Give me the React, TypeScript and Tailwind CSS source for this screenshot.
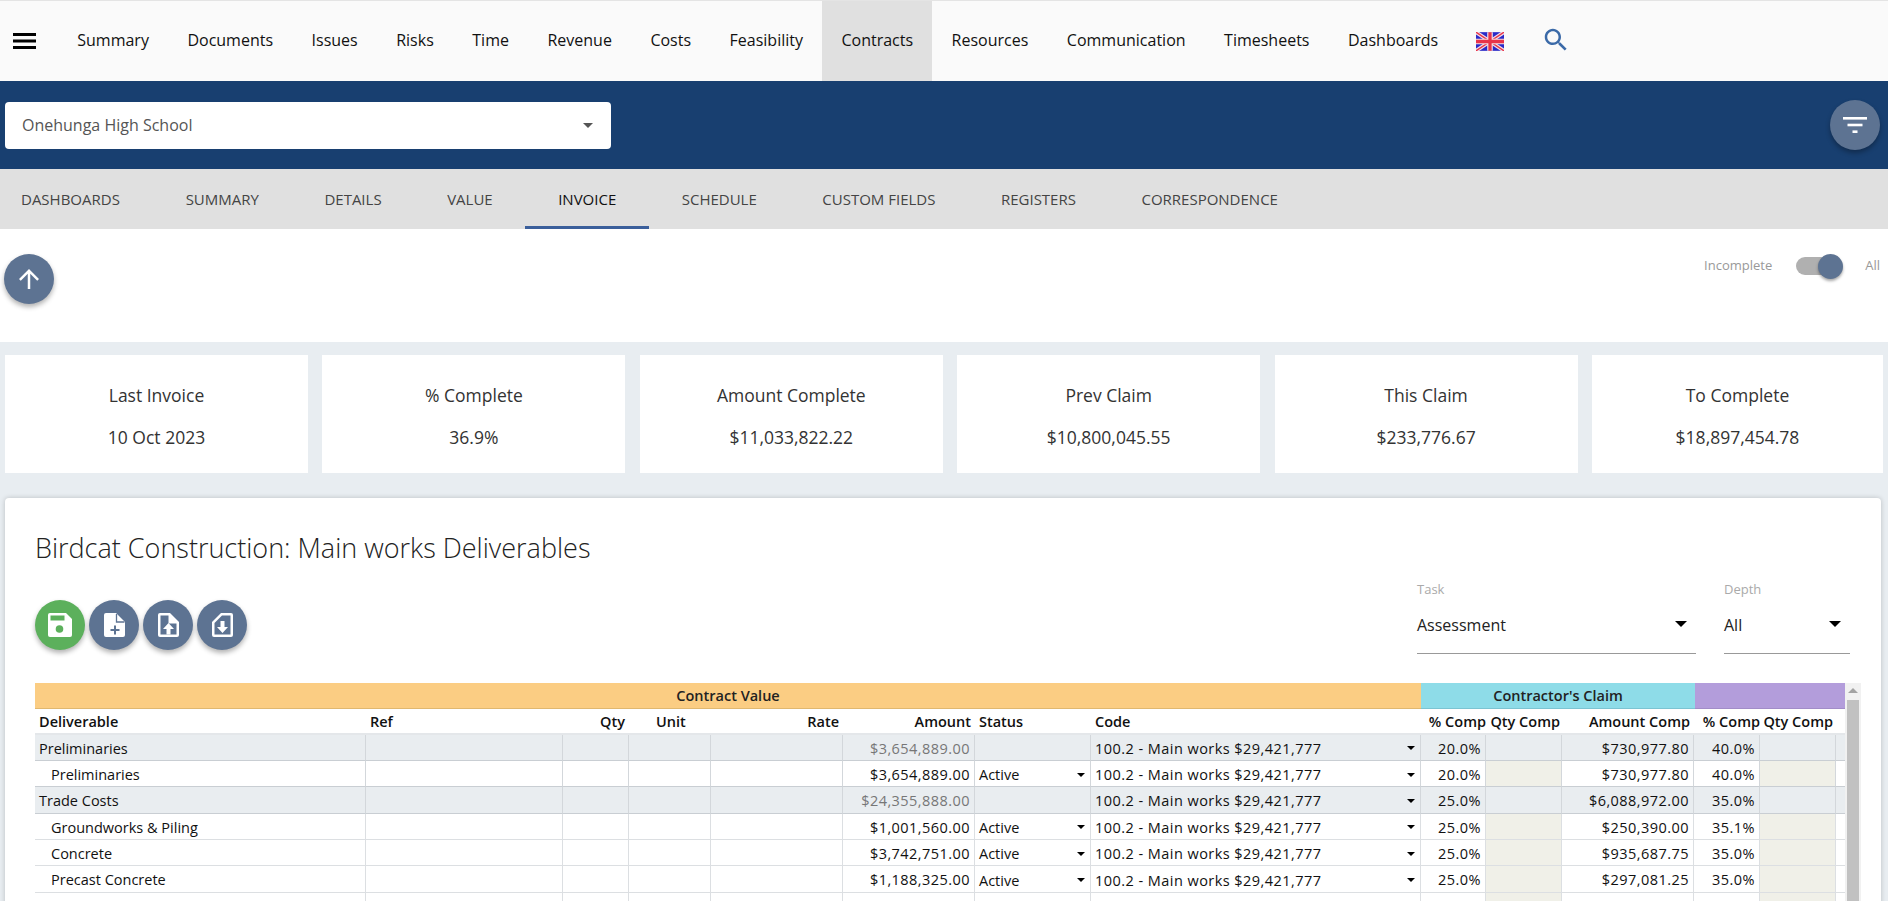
const navItems = ['Summary', 'Documents', 'Issues', 'Risks', 'Time', 'Revenue', 'Costs', 'Feasibility', 'Contracts', 'Resources', 'Communication', 'Timesheets', 'Dashboards']
const tabs = ['DASHBOARDS', 'SUMMARY', 'DETAILS', 'VALUE', 'INVOICE', 'SCHEDULE', 'CUSTOM FIELDS', 'REGISTERS', 'CORRESPONDENCE']
const stats = [
  { label: 'Last Invoice', value: '10 Oct 2023' },
  { label: '% Complete', value: '36.9%' },
  { label: 'Amount Complete', value: '$11,033,822.22' },
  { label: 'Prev Claim', value: '$10,800,045.55' },
  { label: 'This Claim', value: '$233,776.67' },
  { label: 'To Complete', value: '$18,897,454.78' }
]

type TRow = {
  name: string
  amount: string
  group?: boolean
  comp: string
  amountComp: string
  comp2: string
}

const rows: TRow[] = [
  { name: 'Preliminaries', amount: '$3,654,889.00', group: true, comp: '20.0%', amountComp: '$730,977.80', comp2: '40.0%' },
  { name: 'Preliminaries', amount: '$3,654,889.00', comp: '20.0%', amountComp: '$730,977.80', comp2: '40.0%' },
  { name: 'Trade Costs', amount: '$24,355,888.00', group: true, comp: '25.0%', amountComp: '$6,088,972.00', comp2: '35.0%' },
  { name: 'Groundworks & Piling', amount: '$1,001,560.00', comp: '25.0%', amountComp: '$250,390.00', comp2: '35.1%' },
  { name: 'Concrete', amount: '$3,742,751.00', comp: '25.0%', amountComp: '$935,687.75', comp2: '35.0%' },
  { name: 'Precast Concrete', amount: '$1,188,325.00', comp: '25.0%', amountComp: '$297,081.25', comp2: '35.0%' },
  { name: '', amount: '$1,412,500.00', comp: '', amountComp: '$353,125.00', comp2: '' }
]

const Caret = ({ className }: { className: string }) => (
  <span className={`inline-block h-0 w-0 border-x-transparent border-t-black ${className}`} />
)

const RoundBtn = ({ children, green }: { children: React.ReactNode; green?: boolean }) => (
  <div className={`flex h-[50px] w-[50px] shrink-0 items-center justify-center rounded-full shadow-[0_3px_5px_rgba(0,0,0,0.3)] ${green ? 'bg-[#5cb05c]' : 'bg-[#5d7392]'}`}>
    {children}
  </div>
)

const UkFlag = () => (
  <svg width="28" height="19" viewBox="0 0 60 40">
    <rect width="60" height="40" fill="#2a2ac8" />
    <path d="M0 0L60 40M60 0L0 40" stroke="#f3dfe6" strokeWidth="8" />
    <path d="M0 0L60 40M60 0L0 40" stroke="#e8334a" strokeWidth="3" />
    <path d="M30 0V40M0 20H60" stroke="#f3dfe6" strokeWidth="12" />
    <path d="M30 0V40M0 20H60" stroke="#e8334a" strokeWidth="7" />
  </svg>
)

const grid = 'grid grid-cols-[331px_197px_66px_82px_132px_132px_116px_330px_65px_76px_132px_66px_76px_9px]'
const cell = 'border-r border-b overflow-hidden whitespace-nowrap px-1 leading-[27px] h-[26.4px]'
const num = 'tracking-[0.45px]'

export default function App() {
  return (
    <div className="h-[901px] overflow-hidden bg-white text-[#222] [font-family:'Open_Sans',sans-serif]">
      <nav className="flex h-[81px] items-stretch border-t border-[#e4e4e4] bg-[#fafafa]">
        <div className="flex w-[58px] items-center pb-[1px] pl-[13px]">
          <svg width="23" height="16" viewBox="0 0 23 16" fill="#000">
            <rect width="23" height="3" />
            <rect y="6.5" width="23" height="3" />
            <rect y="13" width="23" height="3" />
          </svg>
        </div>
        {navItems.map((item) => (
          <div key={item} className={`flex items-center px-[19.25px] pb-[2px] text-[16px] text-[#111] ${item === 'Contracts' ? 'bg-[#e0e0e0]' : ''}`}>
            {item}
          </div>
        ))}
        <div className="ml-[19px] flex items-center">
          <UkFlag />
        </div>
        <div className="ml-[37px] flex items-center pb-[2px]">
          <svg width="30" height="30" viewBox="0 0 24 24" fill="#3b6aa8">
            <path d="M15.5 14h-.79l-.28-.27C15.41 12.59 16 11.11 16 9.5 16 5.91 13.09 3 9.5 3S3 5.91 3 9.5 5.91 16 9.5 16c1.61 0 3.09-.59 4.23-1.57l.27.28v.79l5 4.99L20.49 19l-4.99-5zm-6 0C7.01 14 5 11.99 5 9.5S7.01 5 9.5 5 14 7.01 14 9.5 11.99 14 9.5 14z" />
          </svg>
        </div>
      </nav>

      <div className="flex h-[88px] items-center justify-between bg-[#183f70] pr-2 pl-[5px]">
        <div className="flex h-[47px] w-[606px] items-center justify-between rounded-sm bg-white pr-[18px] pl-[17px] text-[16px] text-[#555]">
          Onehunga High School
          <Caret className="border-x-[5px] border-t-[5px] !border-t-[#555]" />
        </div>
        <RoundBtn>
          <svg width="24" height="16" viewBox="0 0 24 16" fill="#fff">
            <rect width="24" height="2.600" />
            <rect x="4.500" y="6.700" width="15" height="2.600" />
            <rect x="9.500" y="13.400" width="5" height="2.600" />
          </svg>
        </RoundBtn>
      </div>

      <div className="flex h-[60px] bg-[#e0e0e0]">
        {tabs.map((tab, i) => (
          <div
            key={tab}
            className={`flex items-center border-b-[3px] pt-[3px] text-[15px] ${i === 0 ? 'pr-[33px] pl-[21px]' : 'px-[32.750px]'} ${tab === 'INVOICE' ? 'border-[#3b5f9b] text-[#111]' : 'border-transparent text-[#444]'}`}
          >
            {tab}
          </div>
        ))}
      </div>

      <div className="flex h-[113px] items-start justify-between pt-[25px] pr-2 pl-1">
        <RoundBtn>
          <svg width="30" height="30" viewBox="0 0 24 24" fill="#fff">
            <path d="M4 12l1.41 1.41L11 7.83V20h2V7.830l5.580 5.590L20 12l-8-8-8 8z" />
          </svg>
        </RoundBtn>
        <div className="mt-[2px] flex items-center text-[13px] text-[#999]">
          <span>Incomplete</span>
          <div className="relative mr-[35px] ml-6 h-[18px] w-[34px] rounded-full bg-[#b0b0b0]">
            <span className="absolute top-[-3px] left-[22px] h-[25px] w-[25px] rounded-full bg-[#5d7392] shadow-[0_2px_3px_rgba(0,0,0,0.35)]" />
          </div>
          <span>All</span>
        </div>
      </div>

      <div className="bg-[#e8edf1] px-[5px] py-[13px]">
        <div className="flex gap-[14.4px]">
          {stats.map((s, i) => (
            <div key={s.label} className={`flex h-[118px] ${i === 5 ? 'flex-1' : 'w-[303px]'} flex-col items-center justify-center gap-[16px] bg-white pt-[4px] text-[17.500px] text-[#333]`}>
              <div>{s.label}</div>
              <div>{s.value}</div>
            </div>
          ))}
        </div>
        <div className="mt-[25px] mr-[2px] rounded-sm bg-white pt-[30px] pr-[18px] pl-[30px] shadow-[0_0_5px_rgba(0,0,0,0.2)]">
          <h1 className="text-[27px] leading-[40px] font-light text-[#222]">Birdcat Construction: Main works Deliverables</h1>
          <div className="flex items-start justify-between">
            <div className="mt-[32px] flex gap-[4px]">
              <RoundBtn green>
                <svg width="24" height="24" viewBox="0 0 24 24" fill="#fff">
                  <path d="M2 0h16l6 6v16a2 2 0 0 1-2 2H2a2 2 0 0 1-2-2V2a2 2 0 0 1 2-2z" />
                  <rect x="2.500" y="2.500" width="14" height="5" fill="#5cb05c" />
                  <circle cx="11.500" cy="16" r="3.800" fill="#5cb05c" />
                </svg>
              </RoundBtn>
              <RoundBtn>
                <svg width="21" height="24" viewBox="0 0 21 24" fill="#fff">
                  <path d="M2 0h10l9 9v13a2 2 0 0 1-2 2H2a2 2 0 0 1-2-2V2a2 2 0 0 1 2-2z" />
                  <path d="M12.500 1v8h8" fill="none" stroke="#5d7392" strokeWidth="1.300" />
                  <path d="M11 12.500v9M6.500 17h9" stroke="#5d7392" strokeWidth="2" />
                </svg>
              </RoundBtn>
              <RoundBtn>
                <svg width="21" height="24" viewBox="0 0 21 24">
                  <path d="M2 0h10l9 9v13a2 2 0 0 1-2 2H2a2 2 0 0 1-2-2V2a2 2 0 0 1 2-2z" fill="#fff" />
                  <path d="M2.500 2.500h8v8h8v11h-16z" fill="#5d7392" />
                  <path d="M10.500 10l5.500 6h-3.500v5.500h-4V16H5z" fill="#fff" />
                </svg>
              </RoundBtn>
              <RoundBtn>
                <svg width="21" height="24" viewBox="0 0 21 24">
                  <path d="M9 0h10a2 2 0 0 1 2 2v20a2 2 0 0 1-2 2H2a2 2 0 0 1-2-2V9z" fill="#fff" />
                  <path d="M10 2.500h8.500v19h-16V10z" fill="#5d7392" />
                  <path d="M10.500 20l-5.500-6h3.500V8h4v6H16z" fill="#fff" />
                </svg>
              </RoundBtn>
            </div>
            <div className="mt-[12px] mr-[13px] flex gap-[28px]">
              <div className="w-[279px]">
                <div className="text-[13px] text-[#aaa]">Task</div>
                <div className="mt-[13px] flex h-[41px] items-start justify-between border-b border-[#999] pr-[9px] text-[16px] text-[#222]">
                  Assessment
                  <Caret className="mt-[8px] border-x-[6.500px] border-t-[6.500px]" />
                </div>
              </div>
              <div className="w-[126px]">
                <div className="text-[13px] text-[#aaa]">Depth</div>
                <div className="mt-[13px] flex h-[41px] items-start justify-between border-b border-[#999] pr-[9px] text-[16px] text-[#222]">
                  All
                  <Caret className="mt-[8px] border-x-[6.500px] border-t-[6.500px]" />
                </div>
              </div>
            </div>
          </div>

          <div className="mt-[29px] flex">
            <div className="w-[1810px] text-[14.500px] text-[#111]">
              <div className="flex h-[26px] text-center leading-[25px] font-semibold text-[#222]">
                <div className="w-[1386px] border-b border-[#e0b870] bg-[#fbcd83]">Contract Value</div>
                <div className="w-[274px] border-b border-[#7cc4d2] bg-[#8edce8]">Contractor's Claim</div>
                <div className="flex-1 border-b border-[#a28dc8] bg-[#b39ddb]" />
              </div>
              <div className={`${grid} h-[26px] border-b-2 border-[#e4e7ea] leading-[25px] font-semibold whitespace-nowrap`}>
                <div className="px-1">Deliverable</div>
                <div className="px-1">Ref</div>
                <div className="px-1 text-right">Qty</div>
                <div className="px-[27px]">Unit</div>
                <div className="px-1 text-right">Rate</div>
                <div className="px-1 text-right">Amount</div>
                <div className="px-1">Status</div>
                <div className="px-1">Code</div>
                <div className="text-right">% Comp</div>
                <div className="pr-[2px] text-right">Qty Comp</div>
                <div className="px-1 text-right">Amount Comp</div>
                <div className="text-right">% Comp</div>
                <div className="pr-[3px] text-right">Qty Comp</div>
                <div />
              </div>
              {rows.map((r, i) => {
                const dark = r.group || rows[i + 1]?.group
                const line = dark ? 'border-b-[#c9ced3] border-r-[#d3d7db]' : 'border-[#dcdfe2]'
                const c = `${cell} ${line}`
                return (
                  <div key={i} className={`${grid} ${r.group ? 'bg-[#e9edf0]' : ''}`}>
                    <div className={`${c} ${r.group ? 'pl-1' : 'pl-4'}`}>{r.name}</div>
                    <div className={c} />
                    <div className={c} />
                    <div className={c} />
                    <div className={c} />
                    <div className={`${c} ${num} text-right ${r.group ? 'text-[#777]' : ''}`}>{r.amount}</div>
                    <div className={`${c} flex items-center justify-between pt-[2px] pr-[5px]`}>
                      {r.group || !r.name ? '' : 'Active'}
                      {!r.group && r.name && <Caret className="border-x-[4px] border-t-[4px]" />}
                    </div>
                    <div className={`${c} ${num} flex items-center justify-between pt-[2px] pr-[5px]`}>
                      100.2 - Main works $29,421,777
                      <Caret className="border-x-[4px] border-t-[4px]" />
                    </div>
                    <div className={`${c} ${num} text-right`}>{r.comp}</div>
                    <div className={`${c} ${r.group ? '' : 'bg-[#f0f0e8]'}`} />
                    <div className={`${c} ${num} text-right`}>{r.amountComp}</div>
                    <div className={`${c} ${num} text-right`}>{r.comp2}</div>
                    <div className={`${c} ${r.group ? '' : 'bg-[#f0f0e8]'}`} />
                    <div className={`border-b ${line}`} />
                  </div>
                )
              })}
            </div>
            <div className="relative w-[16px] bg-[#f1f1f1]">
              <span className="absolute top-[5px] left-[3px] h-0 w-0 border-x-[5px] border-b-[5px] border-x-transparent border-b-[#a3a3a3]" />
              <div className="mx-auto mt-[17px] h-[300px] w-[12px] bg-[#c1c1c1]" />
            </div>
          </div>
        </div>
      </div>
    </div>
  )
}
